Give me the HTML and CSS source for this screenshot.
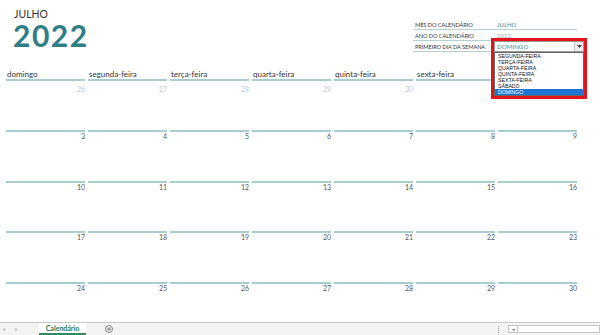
FILE: index.html
```html
<!DOCTYPE html>
<html lang="pt">
<head>
<meta charset="utf-8">
<title>Calendário</title>
<link rel="stylesheet" href="styles.css">
</head>
<body>
<div class="page">
  <header class="top">
    <div class="title">
      <div class="month">JULHO</div>
      <div class="year">2022</div>
    </div>
    <div class="info">
      <div class="irow"><span class="lbl">MÊS DO CALENDÁRIO</span><span class="val">JULHO</span></div>
      <div class="irow"><span class="lbl">ANO DO CALENDÁRIO</span><span class="val light">2022</span></div>
      <div class="irow"><span class="lbl">PRIMEIRO DIA DA SEMANA</span><span class="val">DOMINGO</span></div>
    </div>
  </header>

  <div class="cal">
    <div class="hd">domingo</div>
    <div class="hd">segunda-feira</div>
    <div class="hd">terça-feira</div>
    <div class="hd">quarta-feira</div>
    <div class="hd">quinta-feira</div>
    <div class="hd">sexta-feira</div>
    <div class="hd">sábado</div>

    <div class="day first prev">26</div>
    <div class="day first prev">27</div>
    <div class="day first prev">28</div>
    <div class="day first prev">29</div>
    <div class="day first prev">30</div>
    <div class="day first prev"></div>
    <div class="day first prev"></div>

    <div class="day">3</div>
    <div class="day">4</div>
    <div class="day">5</div>
    <div class="day">6</div>
    <div class="day">7</div>
    <div class="day">8</div>
    <div class="day">9</div>

    <div class="day">10</div>
    <div class="day">11</div>
    <div class="day">12</div>
    <div class="day">13</div>
    <div class="day">14</div>
    <div class="day">15</div>
    <div class="day">16</div>

    <div class="day">17</div>
    <div class="day">18</div>
    <div class="day">19</div>
    <div class="day">20</div>
    <div class="day">21</div>
    <div class="day">22</div>
    <div class="day">23</div>

    <div class="day">24</div>
    <div class="day">25</div>
    <div class="day">26</div>
    <div class="day">27</div>
    <div class="day">28</div>
    <div class="day">29</div>
    <div class="day">30</div>
  </div>

  <div class="dropdown">
    <div class="sel">
      <span class="seltext">DOMINGO</span>
      <span class="selbtn"><svg width="5" height="3" viewBox="0 0 5 3"><path d="M0 0H5L2.5 3Z" fill="#444"/></svg></span>
    </div>
    <ul class="list">
      <li>SEGUNDA-FEIRA</li>
      <li>TERÇA-FEIRA</li>
      <li>QUARTA-FEIRA</li>
      <li>QUINTA-FEIRA</li>
      <li>SEXTA-FEIRA</li>
      <li>SÁBADO</li>
      <li class="on">DOMINGO</li>
    </ul>
  </div>

  <footer class="tabs">
    <span class="nav">&#9666;</span>
    <span class="nav">&#9656;</span>
    <span class="tab">Calendário</span>
    <span class="add"><svg width="8" height="8" viewBox="0 0 8 8"><circle cx="4" cy="4" r="3.5" fill="none" stroke="#6a6a6a" stroke-width="0.8"/><path d="M4 2V6M2 4H6" stroke="#6a6a6a" stroke-width="0.8"/></svg></span>
    <span class="dots"></span>
    <div class="hscroll">
      <span class="sbtn">&#9666;</span>
      <span class="strack"></span>
    </div>
  </footer>
</div>
</body>
</html>
```

FILE: styles.css
```css
html, body {
  margin: 0;
  padding: 0;
  background: #fff;
}
body {
  width: 600px;
  height: 335px;
  overflow: hidden;
  font-family: Lato, "Open Sans", sans-serif;
}
.page {
  position: relative;
  width: 600px;
  height: 335px;
  display: flex;
  flex-direction: column;
}
.top {
  height: 69px;
  display: flex;
  flex-shrink: 0;
}
.title {
  padding-left: 14px;
  padding-top: 7.5px;
}
.month {
  font-size: 10.5px;
  line-height: 12px;
  color: #333;
}
.year {
  font-size: 30px;
  line-height: 30px;
  font-weight: 700;
  color: #2f7d87;
  letter-spacing: 1.5px;
  margin-top: 0.5px;
  margin-left: -1px;
}
.info {
  margin-left: auto;
  margin-right: 23px;
  padding-top: 19px;
  width: 164px;
}
.irow {
  display: grid;
  grid-template-columns: 84px 80px;
  height: 10px;
  border-bottom: 1px solid #b3d0d3;
  font-size: 5.7px;
  line-height: 9px;
}
.irow span {
  padding-top: 1px;
  white-space: nowrap;
}
.lbl {
  padding-left: 2px;
  color: #3a3a3a;
  letter-spacing: -0.1px;
}
.val {
  color: #3a8f99;
  font-size: 6px;
}
.val.light {
  color: #8fb0b4;
}

.cal {
  flex: 1;
  overflow: hidden;
  display: grid;
  padding-left: 6px;
  grid-template-columns: repeat(7, 79px);
  column-gap: 3px;
  grid-template-rows: 12px 49px 51px 50px 51px 40px;
  align-content: start;
}
.hd {
  font-size: 8px;
  line-height: 10px;
  color: #333;
  padding-left: 1px;
  border-bottom: 2px solid #a8cdd1;
  white-space: nowrap;
}
.day {
  border-top: 2px solid #a8cdd1;
  font-size: 7px;
  line-height: 8px;
  text-align: right;
  color: #595959;
}
.day.first {
  border-top: 0;
  padding-top: 4.3px;
}
.day.prev {
  color: #c4c4c4;
}

.dropdown {
  position: absolute;
  left: 491px;
  top: 38px;
  width: 90px;
  border: 3px solid #e3151b;
  background: #fff;
}
.sel {
  height: 9px;
  border: 1px solid #9a9a9a;
  display: flex;
  align-items: center;
}
.seltext {
  flex: 1;
  font-size: 6.2px;
  color: #3a8f99;
  padding-left: 2px;
  line-height: 9px;
}
.selbtn {
  width: 8px;
  height: 9px;
  border-left: 1px solid #c8c8c8;
  background: #ececec;
  display: flex;
  align-items: center;
  justify-content: center;
}
.list {
  list-style: none;
  margin: 0;
  padding: 0;
  border: 0.5px solid #666;
  font-family: "Liberation Sans", Arial, sans-serif;
  font-size: 5.2px;
  line-height: 6px;
  color: #111;
}
.list li {
  height: 6px;
  padding-left: 3px;
  white-space: nowrap;
  overflow: hidden;
}
.list li.on {
  background: #1f75d4;
  color: #fff;
}

.tabs {
  height: 12px;
  flex-shrink: 0;
  border-top: 1px solid #c9c9c9;
  background: #f3f3f3;
  display: flex;
  align-items: stretch;
  font-size: 7px;
}
.nav {
  color: #c0c0c0;
  font-size: 6px;
  line-height: 12px;
  width: 13px;
  padding-left: 2px;
  box-sizing: border-box;
}
.tab {
  margin-left: 13px;
  width: 47px;
  background: #fff;
  border-bottom: 2px solid #2f8a5c;
  color: #237a58;
  font-weight: 700;
  font-size: 7px;
  line-height: 10px;
  text-align: center;
  box-sizing: border-box;
}
.add {
  margin-left: 19px;
  display: flex;
  align-items: center;
}
.dots {
  margin-left: auto;
  width: 1px;
  margin-top: 3px;
  margin-bottom: 2px;
  border-left: 1px dotted #9a9a9a;
  margin-right: 8px;
}
.hscroll {
  width: 92px;
  display: flex;
  margin-top: 2px;
  margin-bottom: 2px;
}
.sbtn {
  width: 8px;
  border: 1px solid #c6c6c6;
  background: #fff;
  color: #666;
  font-size: 5px;
  line-height: 6px;
  text-align: center;
}
.strack {
  flex: 1;
  border: 1px solid #c6c6c6;
  border-left: 0;
  background: #fff;
}
```
